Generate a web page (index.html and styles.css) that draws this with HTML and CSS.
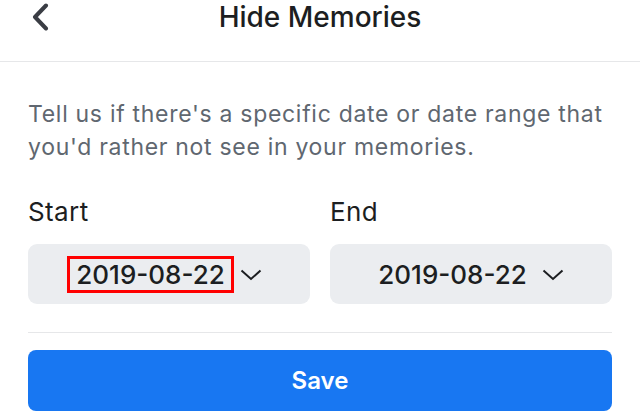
FILE: index.html
```html
<!DOCTYPE html>
<html lang="en">
<head>
    <meta charset="UTF-8">
    <meta name="viewport" content="width=device-width, initial-scale=1.0">
    <title>Hide Memories</title>
    <link rel="stylesheet" href="styles.css">
</head>
<body>

<div class="header">
    <button class="back" aria-label="Back">
        <svg width="18" height="28" viewBox="0 0 18 28">
            <path d="M15 2.5 L4 14 L15 25.5" fill="none" stroke="#3a3d44" stroke-width="4" stroke-linecap="round" stroke-linejoin="round"/>
        </svg>
    </button>
    <h1>Hide Memories</h1>
    <div></div>
</div>

<div class="content">
    <p class="intro">Tell us if there's a specific date or date range that you'd rather not see in your memories.</p>

    <div class="range">
        <div class="field">
            <div class="label">Start</div>
            <div class="picker">
                <span class="date marked">2019-08-22</span>
                <svg class="caret" width="22" height="12" viewBox="0 0 22 12"><path d="M1.5 1.5 L11 10 L20.5 1.5" fill="none" stroke="#1c1e21" stroke-width="2"/></svg>
            </div>
        </div>
        <div class="field">
            <div class="label">End</div>
            <div class="picker">
                <span class="date">2019-08-22</span>
                <svg class="caret" width="22" height="12" viewBox="0 0 22 12"><path d="M1.5 1.5 L11 10 L20.5 1.5" fill="none" stroke="#1c1e21" stroke-width="2"/></svg>
            </div>
        </div>
    </div>

    <hr class="divider">

    <button class="save">Save</button>
</div>

</body>
</html>
```

FILE: styles.css
```css
body {
    font-family: Inter, "Liberation Sans", Arial, sans-serif;
    background-color: #fff;
    color: #1c1e21;
    margin: 0;
}

.header {
    display: grid;
    grid-template-columns: 1fr auto 1fr;
    align-items: start;
    height: 61px;
    border-bottom: 1px solid #e6e7e9;
}
.back {
    justify-self: start;
    background: none;
    border: none;
    padding: 3px 0 0 31px;
    cursor: pointer;
}
.header h1 {
    margin: 0;
    padding-top: 1px;
    font-size: 28px;
    line-height: 32px;
    font-weight: 500;
    color: #1c1e21;
}

.content {
    padding: 0 28px;
}

.intro {
    margin: 36px 0 0;
    font-size: 23px;
    line-height: 33px;
    letter-spacing: 0.7px;
    color: #606770;
}

.range {
    display: grid;
    grid-template-columns: 1fr 1fr;
    gap: 20px;
    margin-top: 32px;
}
.label {
    font-size: 26px;
    line-height: 32px;
    letter-spacing: 0.4px;
    margin-bottom: 16px;
}
.picker {
    display: flex;
    justify-content: center;
    align-items: center;
    gap: 15px;
    height: 60px;
    background-color: #ebedf0;
    border-radius: 9px;
}
.date {
    font-size: 26px;
    font-weight: 500;
}
.date.marked {
    border: 3px solid #f00;
    padding: 0 6px;
    margin: 0 -9px;
}
.caret {
    margin-top: 2px;
}

.divider {
    border: none;
    border-top: 1px solid #e6e7e9;
    margin: 28px 0 17px;
}

.save {
    display: block;
    width: 100%;
    height: 61px;
    border: none;
    border-radius: 8px;
    background-color: #1877f2;
    color: #fff;
    font-family: inherit;
    font-size: 24px;
    font-weight: 600;
    cursor: pointer;
}
```
